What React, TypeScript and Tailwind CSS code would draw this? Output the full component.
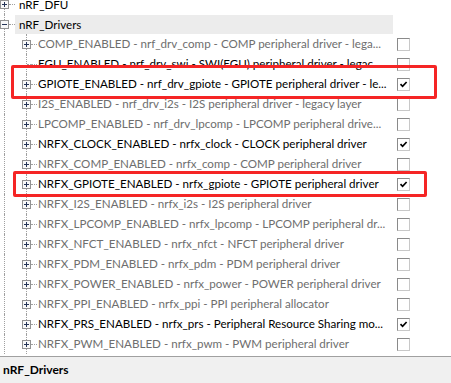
import React from 'react';

type Item = { label: string; gray?: boolean; checked?: boolean; leaf?: boolean };

const items: Item[] = [
  { label: 'COMP_ENABLED - nrf_drv_comp - COMP peripheral driver - lega...', gray: true },
  { label: 'EGU_ENABLED - nrf_drv_swi - SWI(EGU) peripheral driver - legac...', leaf: true },
  { label: 'GPIOTE_ENABLED - nrf_drv_gpiote - GPIOTE peripheral driver - le...', checked: true },
  { label: 'I2S_ENABLED - nrf_drv_i2s - I2S peripheral driver - legacy layer', gray: true },
  { label: 'LPCOMP_ENABLED - nrf_drv_lpcomp - LPCOMP peripheral drive...', gray: true },
  { label: 'NRFX_CLOCK_ENABLED - nrfx_clock - CLOCK peripheral driver', checked: true },
  { label: 'NRFX_COMP_ENABLED - nrfx_comp - COMP peripheral driver', gray: true },
  { label: 'NRFX_GPIOTE_ENABLED - nrfx_gpiote - GPIOTE peripheral driver', checked: true },
  { label: 'NRFX_I2S_ENABLED - nrfx_i2s - I2S peripheral driver', gray: true },
  { label: 'NRFX_LPCOMP_ENABLED - nrfx_lpcomp - LPCOMP peripheral dr...', gray: true },
  { label: 'NRFX_NFCT_ENABLED - nrfx_nfct - NFCT peripheral driver', gray: true },
  { label: 'NRFX_PDM_ENABLED - nrfx_pdm - PDM peripheral driver', gray: true },
  { label: 'NRFX_POWER_ENABLED - nrfx_power - POWER peripheral driver', gray: true },
  { label: 'NRFX_PPI_ENABLED - nrfx_ppi - PPI peripheral allocator', gray: true },
  { label: 'NRFX_PRS_ENABLED - nrfx_prs - Peripheral Resource Sharing mo...', checked: true },
  { label: 'NRFX_PWM_ENABLED - nrfx_pwm - PWM peripheral driver', gray: true },
];

const Expander = ({ minus = false }: { minus?: boolean }) => (
  <svg width="9" height="9" viewBox="0 0 9 9" className="relative">
    <rect x="0.5" y="0.5" width="8" height="8" fill="#f8f8f8" stroke="#929292" />
    <path d="M2 4.5h5" stroke="#243456" />
    {!minus && <path d="M4.5 2v5" stroke="#243456" />}
  </svg>
);

const Checkbox = ({ checked }: { checked?: boolean }) => (
  <div className="ml-[5px] flex h-[13px] w-[13px] items-center justify-center border border-[#8a8a8a] border-r-[#c8c8c8] border-b-[#c8c8c8] bg-white">
    {checked && (
      <svg width="9" height="9" viewBox="0 0 9 9">
        <path d="M1.5 4.2 L3.6 6.3 L7.6 2" fill="none" stroke="#000" strokeWidth="1.7" />
      </svg>
    )}
  </div>
);

const TopRow = ({ label, minus, active }: { label: string; minus?: boolean; active?: boolean }) => (
  <div className="flex h-[20px] items-center">
    <div className="relative flex h-full w-[9px] items-center">
      <div className="absolute left-[4px] top-0 h-full border-l border-dotted border-[#a0a0a0]" />
      <Expander minus={minus} />
    </div>
    <div className="w-[6px] border-t border-dotted border-[#a0a0a0]" />
    <div className={`mt-[1px] flex h-[19px] w-[378px] items-center pl-[4px] text-black ${active ? 'bg-[#ececec]' : ''}`}>
      {label}
    </div>
  </div>
);

const ChildRow = ({ item }: { item: Item }) => (
  <div className="flex h-[20px] items-center">
    <div className="h-full w-[22px] pl-[4px]">
      <div className="h-full border-l border-dotted border-[#a0a0a0]" />
    </div>
    <div className="relative flex h-full w-[9px] items-center">
      <div className="absolute left-[4px] top-0 h-full border-l border-dotted border-[#a0a0a0]" />
      {item.leaf ? (
        <div className="ml-[5px] w-[4px] border-t border-dotted border-[#a0a0a0]" />
      ) : (
        <Expander />
      )}
    </div>
    <div className="mr-[1px] w-[6px] border-t border-dotted border-[#a0a0a0]" />
    <div className={`w-[354px] overflow-hidden whitespace-nowrap ${item.gray ? 'text-[#6e6e6e]' : 'text-black'}`}>
      {item.label}
    </div>
    <Checkbox checked={item.checked} />
  </div>
);

export default function App() {
  return (
    <div className="flex h-[383px] w-[451px] flex-col bg-white text-[11.6px] font-['Lato','Liberation_Sans',sans-serif]">
      <div className="relative h-[356px] overflow-hidden">
        <div className="-mt-[6px]">
          <TopRow label="nRF_DFU" />
          <TopRow label="nRF_Drivers" minus active />
          {items.map((it) => (
            <ChildRow key={it.label} item={it} />
          ))}
        </div>
        <div className="absolute left-[11px] top-[65px] h-[34px] w-[426px] rounded-[2px] border-[3px] border-[#f52525]" />
        <div className="absolute left-[13px] top-[171px] h-[26px] w-[414px] rounded-[2px] border-[3px] border-[#f52525]" />
      </div>
      <div className="flex h-[27px] items-center border-t border-[#a0a0a0] bg-[#f0f0f0] px-[3px] text-[12px] font-bold text-black">
        nRF_Drivers
      </div>
    </div>
  );
}
